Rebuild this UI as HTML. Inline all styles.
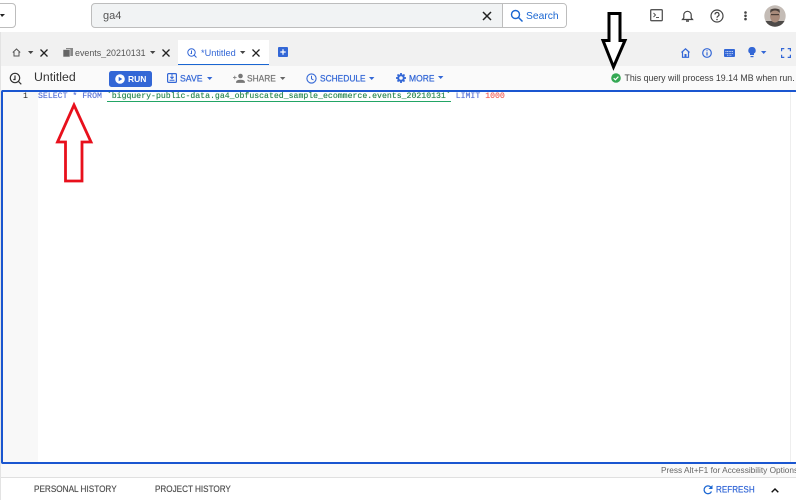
<!DOCTYPE html>
<html><head><meta charset="utf-8"><style>
*{box-sizing:border-box}
html,body{margin:0;padding:0;width:796px;height:500px;overflow:hidden;background:#fff;font-family:"Liberation Sans",sans-serif}
.a{position:absolute;white-space:nowrap}
svg{position:absolute;overflow:visible}
.b{color:#3367d6;font-weight:400;text-shadow:0 0 .5px #3367d6;transform:scaleY(1.1);transform-origin:center}
</style></head><body>
<div class="a" style="left:-10px;top:3px;width:26px;height:25px;border:1px solid #bdbdbd;border-radius:4px"></div>
<svg style="left:0;top:0" width="10" height="30"><path d="M0 14h5l-3 3z" fill="#222"/></svg>
<div class="a" style="left:91px;top:3px;width:476px;height:25px;background:#f1f3f4;border:1px solid #bdbdbd;border-radius:4px"></div>
<div class="a" style="left:502px;top:4px;width:64px;height:23px;background:#fff;border-left:1px solid #bdbdbd;border-radius:0 3px 3px 0"></div>
<div class="a" style="left:103px;top:9px;font-size:11px;line-height:14px;color:#555">ga4</div>
<svg style="left:482px;top:11px" width="10" height="10"><path d="M1 1l8 8M9 1l-8 8" stroke="#222" stroke-width="1.500"/></svg>
<svg style="left:510px;top:9px" width="13" height="13"><circle cx="5.500" cy="5.500" r="4" fill="none" stroke="#1a66d2" stroke-width="1.400"/><path d="M8.500 8.500l4 4" stroke="#1a66d2" stroke-width="1.500"/></svg>
<div class="a" style="left:526px;top:9.500px;font-size:10.300px;line-height:13px;color:#1a66d2">Search</div>
<svg style="left:650px;top:9px" width="14" height="13"><rect x=".7" y=".7" width="11.600" height="11" rx="1" fill="none" stroke="#555" stroke-width="1.300"/><path d="M3.500 4l2 2-2 2M6 8.500h3" fill="none" stroke="#555"/></svg>
<svg style="left:681px;top:9px" width="13" height="14"><path d="M1.500 10.500h10l-1.300-1.600V6a3.700 3.700 0 0 0-7.400 0v2.900z" fill="none" stroke="#444" stroke-width="1.200"/><path d="M5 12h3" stroke="#444" stroke-width="1.500"/></svg>
<svg style="left:710px;top:9px" width="14" height="14"><circle cx="7" cy="7" r="6" fill="none" stroke="#444" stroke-width="1.200"/><path d="M5 5.500a2 2 0 1 1 3 1.700c-.8.500-1 .8-1 1.600" fill="none" stroke="#444" stroke-width="1.200"/><circle cx="7" cy="10.500" r=".8" fill="#444"/></svg>
<svg style="left:743px;top:10px" width="5" height="13"><circle cx="2.500" cy="2.500" r="1.300" fill="#444"/><circle cx="2.500" cy="5.800" r="1.300" fill="#444"/><circle cx="2.500" cy="9.100" r="1.300" fill="#444"/></svg>
<svg style="left:764px;top:5px" width="22" height="22"><defs><clipPath id="c"><circle cx="11" cy="11" r="10.700"/></clipPath></defs><g clip-path="url(#c)"><rect width="22" height="22" fill="#c4bcb6"/><rect x="0" y="16" width="22" height="6" fill="#4d4a48"/><ellipse cx="11" cy="11" rx="5" ry="6.500" fill="#a88a7a"/><path d="M6 8q5-5 10 0l-.5-3.500q-4.500-2-9 0z" fill="#4a403b"/><rect x="7" y="9" width="8" height="1.200" fill="#4a3d37"/></g></svg>

<div class="a" style="left:1px;top:32px;width:795px;height:34px;background:#f1f1f1"></div>
<div class="a" style="left:0;top:32px;width:1px;height:468px;background:#e3e3e3"></div>
<div class="a" style="left:178px;top:40px;width:91px;height:25px;background:#fff;border-bottom:1px solid #1a66d2"></div>

<svg style="left:12px;top:48px" width="9" height="9"><path d="M.8 4.500L4.500 1l3.700 3.500M2 4v4h5V4" fill="none" stroke="#555" stroke-width="1"/></svg>
<svg style="left:28px;top:51px" width="6" height="4"><path d="M0 0h5.400L2.700 3z" fill="#444"/></svg>
<svg style="left:40px;top:49px" width="8" height="8"><path d="M.5.500l7 7M7.500.500l-7 7" stroke="#222" stroke-width="1.300"/></svg>
<svg style="left:63px;top:48px" width="10" height="9"><rect x="3" y="0" width="7" height="8" fill="#888"/><rect x="0" y="1.500" width="7" height="7.500" fill="#666" stroke="#f1f1f1" stroke-width=".6"/></svg>
<div class="a" style="left:75px;top:46.500px;font-size:9.300px;line-height:12px;color:#555;transform:scaleX(.955);transform-origin:left">events_20210131</div>
<svg style="left:150px;top:51px" width="6" height="4"><path d="M0 0h5.400L2.700 3z" fill="#444"/></svg>
<svg style="left:162px;top:49px" width="8" height="8"><path d="M.5.500l7 7M7.500.500l-7 7" stroke="#222" stroke-width="1.300"/></svg>
<svg style="left:187px;top:48px" width="10" height="10"><circle cx="4.500" cy="4.500" r="3.700" fill="none" stroke="#3367d6" stroke-width="1"/><path d="M7 7l2.500 2.500M4.500 2.500v3h-1" fill="none" stroke="#3367d6"/></svg>
<div class="a" style="left:201px;top:46.500px;font-size:9.200px;line-height:12px;color:#3367d6">*Untitled</div>
<svg style="left:240px;top:51px" width="6" height="4"><path d="M0 0h5.400L2.700 3z" fill="#444"/></svg>
<svg style="left:252px;top:49px" width="8" height="8"><path d="M.5.500l7 7M7.500.500l-7 7" stroke="#222" stroke-width="1.300"/></svg>
<svg style="left:278px;top:47px" width="10" height="10"><rect width="10" height="10" rx="1" fill="#3367d6"/><path d="M5 2.300v5.400M2.300 5h5.400" stroke="#fff" stroke-width="1.200"/></svg>

<svg style="left:681px;top:48px" width="9" height="10"><path d="M.5 4.500L4.500.8l4 3.700M1.500 4v5.300h6V4" fill="none" stroke="#3367d6" stroke-width="1.200"/><rect x="3.500" y="6" width="2" height="3.300" fill="#3367d6"/></svg>
<svg style="left:702px;top:48px" width="10" height="10"><circle cx="5" cy="5" r="4.300" fill="none" stroke="#3367d6" stroke-width="1.200"/><path d="M5 4.300v3.200M5 2.300v1" stroke="#3367d6" stroke-width="1.200"/></svg>
<svg style="left:724px;top:49px" width="11" height="8"><rect width="11" height="8" rx="1" fill="#3367d6"/><path d="M1.500 2.500h8M1.500 4.300h8M3 6.200h5" stroke="#fff" stroke-width=".7" stroke-dasharray="1 .6"/></svg>
<svg style="left:748px;top:47px" width="8" height="11"><path d="M4 0a3.500 3.500 0 0 0-2 6.500V8h4V6.500A3.500 3.500 0 0 0 4 0z" fill="#3367d6"/><rect x="2.500" y="9" width="3" height="1.200" fill="#3367d6"/></svg>
<svg style="left:761px;top:51px" width="6" height="4"><path d="M0 0h5.400L2.700 3z" fill="#3367d6"/></svg>
<svg style="left:781px;top:48px" width="10" height="10"><path d="M.6 3.300V.6h2.700M6.700.6h2.700v2.700M9.400 6.700v2.700H6.700M3.300 9.400H.6V6.700" fill="none" stroke="#3367d6" stroke-width="1.200"/></svg>

<div class="a" style="left:1px;top:66px;width:795px;height:24px;background:#fafafa"></div>
<svg style="left:9px;top:72px" width="13" height="13"><circle cx="6" cy="6" r="4.700" fill="none" stroke="#333" stroke-width="1.200"/><path d="M9.500 9.500l2.800 2.800M6 3.500v4H4.300" fill="none" stroke="#333" stroke-width="1.200"/></svg>
<div class="a" style="left:34px;top:70px;font-size:12.300px;line-height:15px;color:#333">Untitled</div>
<div class="a" style="left:109px;top:71px;width:43px;height:16px;background:#3367d6;border-radius:2.500px"></div>
<svg style="left:115px;top:74px" width="10" height="10"><circle cx="5" cy="5" r="4.800" fill="#fff"/><path d="M3.700 2.700v4.600L7.300 5z" fill="#3367d6"/></svg>
<div class="a" style="left:128px;top:73px;font-size:8.500px;line-height:12px;font-weight:700;color:#fff">RUN</div>
<svg style="left:167px;top:73px" width="10" height="10"><rect x=".6" y=".6" width="8.800" height="8.800" rx="1" fill="none" stroke="#3367d6" stroke-width="1.200"/><path d="M5 1v4M3.300 3.800L5 5.500l1.700-1.700M2.500 7.200h5" fill="none" stroke="#3367d6"/></svg>
<div class="a b" style="left:180px;top:72px;font-size:8.700px;line-height:12px">SAVE</div>
<svg style="left:207px;top:76.500px" width="6" height="4"><path d="M0 0h5.400L2.700 3z" fill="#3367d6"/></svg>
<svg style="left:233px;top:73px" width="12" height="10"><circle cx="7.500" cy="3" r="2.300" fill="#777"/><path d="M3.500 9c0-2.500 8-2.500 8 0v.500h-8zM0 4.500h3.600M1.800 2.700v3.600" fill="#777" stroke="#777" stroke-width=".8"/></svg>
<div class="a" style="left:247px;top:72px;font-size:8.400px;line-height:12px;color:#777;text-shadow:0 0 .5px #777;transform:scaleY(1.1)">SHARE</div>
<svg style="left:280px;top:76.500px" width="6" height="4"><path d="M0 0h5.400L2.700 3z" fill="#666"/></svg>
<svg style="left:306px;top:72.500px" width="11" height="11"><circle cx="5.500" cy="5.500" r="4.600" fill="none" stroke="#3367d6" stroke-width="1.100"/><path d="M5.500 2.800v3l2 1.200" fill="none" stroke="#3367d6"/></svg>
<div class="a b" style="left:320px;top:72px;font-size:8.400px;line-height:12px">SCHEDULE</div>
<svg style="left:369px;top:76.500px" width="6" height="4"><path d="M0 0h5.400L2.700 3z" fill="#3367d6"/></svg>
<svg style="left:396px;top:72.500px" width="10" height="10"><circle cx="5" cy="5" r="2.800" fill="none" stroke="#3367d6" stroke-width="2"/><path d="M5 0v2M5 8v2M0 5h2M8 5h2M1.500 1.500l1.400 1.400M7.100 7.100l1.400 1.400M1.500 8.500l1.400-1.400M7.100 2.900l1.400-1.400" stroke="#3367d6" stroke-width="1.800"/></svg>
<div class="a b" style="left:409px;top:72px;font-size:8.500px;line-height:12px">MORE</div>
<svg style="left:438px;top:76px" width="6" height="4"><path d="M0 0h5.400L2.700 3z" fill="#3367d6"/></svg>
<svg style="left:611px;top:73px" width="10" height="10"><circle cx="5" cy="5" r="4.800" fill="#34a853"/><path d="M2.700 5.200l1.700 1.600 3-3.200" fill="none" stroke="#fff" stroke-width="1.200"/></svg>
<div class="a" style="left:624.500px;top:71.500px;font-size:8.800px;line-height:12px;color:#3c3c3c">This query will process 19.14 MB when run.</div>

<div class="a" style="left:1px;top:90px;width:796px;height:374px;border:2px solid #1a56d0;border-right:none;border-radius:2px;background:#fff"></div>
<div class="a" style="left:3px;top:92px;width:35px;height:370px;background:#f8f8f8"></div>
<div class="a" style="left:790px;top:92px;width:1px;height:370px;background:#eee"></div>
<div class="a" style="left:23px;top:91px;font:8.200px/11px 'Liberation Mono',monospace;color:#222">1</div>
<div class="a" style="left:38px;top:91px;font:8.200px/11px 'Liberation Mono',monospace;color:#5f78d8;text-shadow:0 0 .4px #5f78d8"><span>SELECT</span> <span>*</span> <span>FROM</span> <span style="color:#2f8a55;box-shadow:0 1px 0 #22a565;text-shadow:0 0 .4px #2f8a55">`bigquery-public-data.ga4_obfuscated_sample_ecommerce.events_20210131`</span> <span>LIMIT</span> <span style="color:#f2655c;text-shadow:0 0 .4px #f2655c">1000</span></div>
<div class="a" style="left:107px;top:101px;width:343px;height:1px;background:#22a565"></div>

<svg style="left:0;top:0" width="796" height="200"><path d="M74 105L91 142H82V181H65.500V142H57.500Z" fill="#fff" stroke="#e8101c" stroke-width="2.800"/><path d="M609 13.500H620V40.500H625L613.500 67L603 40.500H609Z" fill="#fff" stroke="#000" stroke-width="3"/></svg>

<div class="a" style="left:1px;top:464px;width:795px;height:14px;background:#fafafa;border-bottom:1px solid #e0e0e0"></div>
<div class="a" style="left:661px;top:464.500px;font-size:8.300px;line-height:11px;color:#666">Press Alt+F1 for Accessibility Options</div>
<div class="a" style="left:34px;top:484px;font-size:8.200px;line-height:12px;color:#555;text-shadow:0 0 .4px #555;transform:scaleY(1.1)">PERSONAL HISTORY</div>
<div class="a" style="left:155px;top:484px;font-size:8.150px;line-height:12px;color:#555;text-shadow:0 0 .4px #555;transform:scaleY(1.1)">PROJECT HISTORY</div>
<svg style="left:703px;top:485px" width="10" height="10"><path d="M8.500 6.500A3.900 3.900 0 1 1 7.700 2" fill="none" stroke="#1a66d2" stroke-width="1.300"/><path d="M9.500 0v4h-4z" fill="#1a66d2"/></svg>
<div class="a" style="left:716px;top:484px;font-size:8.100px;line-height:12px;color:#3367d6;text-shadow:0 0 .4px #3367d6;transform:scaleY(1.15)">REFRESH</div>
<svg style="left:771px;top:488px" width="8" height="5"><path d="M.7 4.300L4 1l3.300 3.300" fill="none" stroke="#111" stroke-width="1.400"/></svg>
</body></html>
